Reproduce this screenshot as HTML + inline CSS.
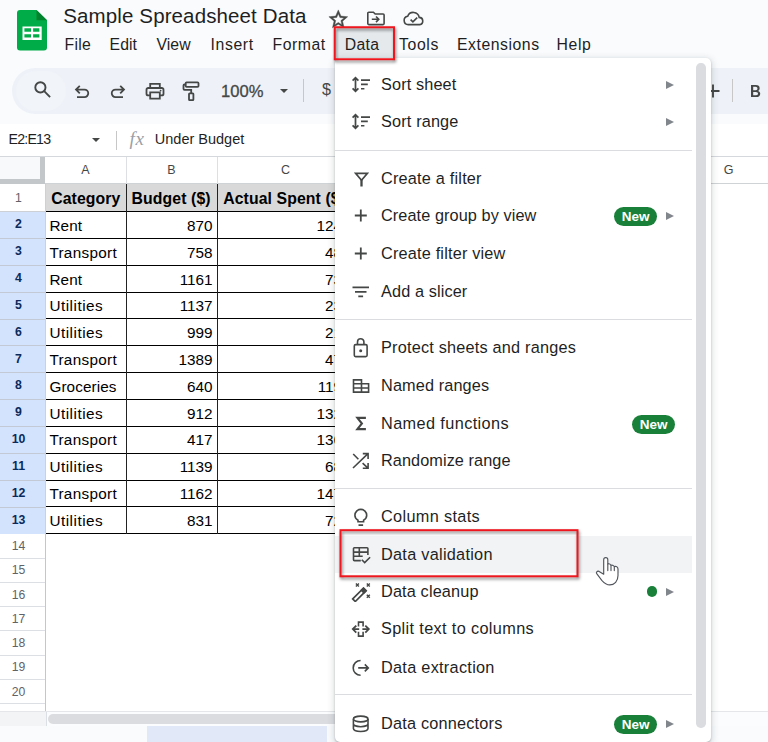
<!DOCTYPE html>
<html lang="en">
<head>
<meta charset="utf-8">
<title>Sample Spreadsheet Data</title>
<style>
*{box-sizing:border-box;margin:0;padding:0}
html,body{width:768px;height:742px;overflow:hidden}
body{position:relative;background:#f9fbfd;font-family:"Liberation Sans",sans-serif;color:#1f1f1f}
.abs{position:absolute}
.t{position:absolute;white-space:nowrap;line-height:1}
/* header */
#title{left:63.3px;top:5.2px;font-size:20.5px;letter-spacing:.12px;color:#1f1f1f;height:22px;line-height:22px}
.mi{top:36px;font-size:15.8px;height:18px;line-height:18px;color:#1f1f1f}
/* toolbar */
#tb{left:12px;top:68px;width:800px;height:46px;border-radius:23px;background:#eef2f8}
/* formula bar */
#fb{left:0;top:123.5px;width:768px;height:32.5px;background:#fff}
/* grid */
.hl{position:absolute;background:#000;height:1px}
.vl{position:absolute;background:#000;width:1px}
.rh{position:absolute;left:0;width:37px;text-align:center;font-size:12.2px;color:#5f6368;height:14px;line-height:14px;white-space:nowrap}
.rhs{font-weight:bold;color:#0b2a5b;font-size:12.3px;margin-top:-1px}
.c{position:absolute;white-space:nowrap;font-size:15.3px;color:#000;line-height:20px;height:20px}
.cb{font-weight:bold;font-size:15.8px;letter-spacing:.1px}
.ca{letter-spacing:.1px}
.cu{letter-spacing:.5px}
.ct{letter-spacing:.3px}
.ch{font-size:12.5px;color:#444746;text-align:center;height:16px;line-height:16px}
/* menu */
#menu{left:335px;top:58px;width:376px;height:684px;background:#fff;border-radius:5px;box-shadow:0 2px 6px 2px rgba(60,64,67,.15),0 1px 2px rgba(60,64,67,.3);overflow:hidden}
.it{position:absolute;left:0;height:37.5px;width:357px}
.it .lb{position:absolute;left:46px;top:0;height:37.5px;line-height:37.5px;font-size:16.3px;white-space:nowrap;color:#1f1f1f}
.it svg.ic{position:absolute;left:15px;top:8.7px;width:21px;height:21px}
.dvl{position:absolute;left:0;width:357px;height:1px;background:#dadce0}
.dot{position:absolute;left:311.500px;top:13.300px;width:10.800px;height:10.800px;border-radius:50%;background:#188038}
.ar{position:absolute;left:331px;top:15.3px;width:0;height:0;border-left:8px solid #80868b;border-top:4px solid transparent;border-bottom:4px solid transparent}
.nw{position:absolute;top:10.2px;width:43.4px;height:19.5px;border-radius:10px;background:#188038;color:#fff;font-weight:bold;font-size:13.5px;line-height:19.5px;text-align:center}
.redf{filter:drop-shadow(1.5px 2px 1.5px rgba(0,0,0,.5))}
</style>
</head>
<body>

<!-- logo -->
<svg class="abs" style="left:17px;top:9.5px" width="30" height="41" viewBox="0 0 30 41">
<path d="M3 0h16.500l10.500 10.300v27.300a3 3 0 0 1-3 3H3a3 3 0 0 1-3-3V3a3 3 0 0 1 3-3z" fill="#00ac47"/>
<path d="M19.500 0l10.500 10.300h-10.500z" fill="#00832d"/>
<path d="M5.500 16.400h19.200v13.500H5.500zM7.400 18.300v3.400h6.600v-3.400zM16.100 18.300v3.400h6.300v-3.400zM7.400 24.300v3.300h6.600v-3.300zM16.100 24.300v3.300h6.300v-3.300z" fill="#fff" fill-rule="evenodd"/>
</svg>

<div class="t" id="title">Sample Spreadsheet Data</div>


<!-- title icons -->
<svg class="abs" style="left:327.2px;top:7.6px" width="22.600" height="22.600" viewBox="0 0 24 24"><path fill="#444746" stroke="#444746" stroke-width=".45" d="M22 9.24l-7.19-.62L12 2 9.19 8.63 2 9.24l5.46 4.73L5.82 21 12 17.27 18.18 21l-1.63-7.03L22 9.24zM12 15.4l-3.76 2.27 1-4.28-3.32-2.88 4.38-.38L12 6.1l1.71 4.04 4.38.38-3.32 2.88 1 4.28L12 15.4z"/></svg>
<svg class="abs" style="left:365px;top:8px" width="22" height="20" viewBox="0 0 22 20"><path d="M2.8 5.2a1 1 0 0 1 1-1h4.6l1.8 1.8h7.9a1 1 0 0 1 1 1v8.6a1 1 0 0 1-1 1H3.8a1 1 0 0 1-1-1z" fill="none" stroke="#444746" stroke-width="1.6"/><path d="M6.8 11.3h6.6M11 8.5l2.8 2.8-2.8 2.8" fill="none" stroke="#444746" stroke-width="1.6"/></svg>
<svg class="abs" style="left:402px;top:9px" width="24" height="18" viewBox="0 0 24 18"><path d="M6.3 15.6a4.2 4.2 0 0 1-.6-8.35 6 6 0 0 1 11.5 1.1 3.65 3.65 0 0 1 .5 7.25z" fill="none" stroke="#444746" stroke-width="1.6"/><path d="M8.6 10.6l2.3 2.3 4.3-4.3" fill="none" stroke="#444746" stroke-width="1.6"/></svg>

<!-- menubar -->
<div class="t mi" style="left:64.5px;letter-spacing:0.3px">File</div>
<div class="t mi" style="left:109.6px;letter-spacing:0.0px">Edit</div>
<div class="t mi" style="left:156.6px;letter-spacing:0.0px">View</div>
<div class="t mi" style="left:210.6px;letter-spacing:0.6px">Insert</div>
<div class="t mi" style="left:272.6px;letter-spacing:0.5px">Format</div>
<div class="abs" style="left:335.5px;top:28px;width:57.5px;height:30.5px;background:#e6e9ec;border-radius:4px"></div>
<div class="t mi" style="left:344.8px;letter-spacing:0.3px">Data</div>
<div class="t mi" style="left:399px;letter-spacing:0.6px">Tools</div>
<div class="t mi" style="left:457px;letter-spacing:0.53px">Extensions</div>
<div class="t mi" style="left:556.6px;letter-spacing:0.55px">Help</div>

<!-- toolbar -->
<div class="abs" id="tb"></div>
<div class="abs" style="left:16px;top:71px;width:50px;height:40px;border-radius:20px;background:#f1f4f9"></div>
<svg class="abs" style="left:30px;top:77.3px" width="24" height="24" viewBox="0 0 24 24"><circle cx="10.4" cy="10.4" r="5.1" fill="none" stroke="#444746" stroke-width="1.9"/><path d="M14.2 14.2l5.9 5.9" stroke="#444746" stroke-width="1.9" fill="none"/></svg>
<svg class="abs" style="left:72px;top:80px" width="20" height="22" viewBox="0 0 20 22"><path d="M7.8 5.8L4 9.6l3.8 3.8M4.4 9.6h8.1a3.75 3.75 0 0 1 0 7.5H5" fill="none" stroke="#444746" stroke-width="1.8"/></svg>
<svg class="abs" style="left:108px;top:80px" width="20" height="22" viewBox="0 0 20 22"><path d="M12.2 5.8L16 9.6l-3.8 3.8M15.6 9.6H7.5a3.75 3.75 0 0 0 0 7.5H15" fill="none" stroke="#444746" stroke-width="1.8"/></svg>
<svg class="abs" style="left:143px;top:80px" width="24" height="22" viewBox="0 0 24 22"><path d="M7.2 8V3.8h9.6V8M6.6 15.4H5.2a1.7 1.7 0 0 1-1.7-1.7V9.7a1.7 1.7 0 0 1 1.7-1.7h13.6a1.7 1.7 0 0 1 1.7 1.7v4a1.7 1.7 0 0 1-1.7 1.7h-1.4M7.2 12.4h9.6v6.2H7.2z" fill="none" stroke="#444746" stroke-width="1.8"/><circle cx="17.6" cy="10.6" r=".9" fill="#444746"/></svg>
<svg class="abs" style="left:180px;top:79px" width="22" height="24" viewBox="0 0 22 24"><path d="M6.6 3.4h11a.9.9 0 0 1 .9.9v2.6a.9.9 0 0 1-.9.9h-11a.9.9 0 0 1-.9-.9V4.300a.9.9 0 0 1 .9-.9zM5.700 5.500H4.500a1 1 0 0 0-1 1v3.300a1 1 0 0 0 1 1h6.700v3.600M9.600 14.400h3.200a.6.600 0 0 1 .6.600v5.600a.6.600 0 0 1-.6.600H9.600a.6.600 0 0 1-.6-.6V15a.6.600 0 0 1 .6-.6z" fill="none" stroke="#444746" stroke-width="1.8"/></svg>
<div class="t" style="left:221px;top:82.2px;font-size:16.6px;height:20px;line-height:20px;color:#444746;-webkit-text-stroke:.3px #444746">100%</div>
<div class="abs" style="left:279.600px;top:88.500px;width:0;height:0;border-top:4.600px solid #444746;border-left:4.400px solid transparent;border-right:4.400px solid transparent"></div>
<div class="abs" style="left:303px;top:79px;width:1px;height:23px;background:#c7c7c7"></div>
<div class="t" style="left:322px;top:79px;font-size:16.200px;height:20px;line-height:20px;color:#444746">$</div>
<svg class="abs" style="left:704px;top:82px" width="18" height="18" viewBox="0 0 18 18"><path d="M9 2.500v13M2.500 9h13" stroke="#444746" stroke-width="1.900" fill="none"/></svg>
<div class="abs" style="left:732px;top:79px;width:1px;height:23px;background:#c7c7c7"></div>
<div class="t" style="left:749.5px;top:80.6px;font-size:17.2px;font-weight:bold;height:20px;line-height:20px;color:#444746;transform:scaleX(.88);transform-origin:0 50%">B</div>

<!-- formula bar -->
<div class="abs" id="fb"></div>
<div class="t" style="left:8.5px;top:130.2px;font-size:14.2px;height:18px;line-height:18px;color:#1f1f1f;letter-spacing:-.8px">E2:E13</div>
<div class="abs" style="left:92.400px;top:137.600px;width:0;height:0;border-top:4.600px solid #444746;border-left:4.600px solid transparent;border-right:4.600px solid transparent"></div>
<div class="abs" style="left:116px;top:131px;width:1px;height:19px;background:#c7c7c7"></div>
<div class="t" style="left:129.5px;top:129px;font-family:'Liberation Serif',serif;font-style:italic;font-size:19px;height:20px;line-height:20px;color:#9aa0a6;letter-spacing:.6px">fx</div>
<div class="t" style="left:154.8px;top:130px;font-size:14.500px;height:18px;line-height:18px;color:#1f1f1f">Under Budget</div>

<!-- grid -->
<!--GRID-->
<div class="abs" style="left:0;top:156px;width:768px;height:570px;background:#fff"></div>
<div class="abs" style="left:0;top:156px;width:768px;height:1px;background:#d5d8dc"></div>
<div class="abs" style="left:0;top:157px;width:45px;height:27px;background:#f8f9fa"></div>
<div class="abs" style="left:40px;top:157px;width:5px;height:27px;background:#c4c7ca"></div>
<div class="abs" style="left:0;top:179px;width:45px;height:5px;background:#c4c7ca"></div>
<div class="abs" style="left:45px;top:183px;width:723px;height:1px;background:#d0d3d6"></div>
<div class="abs" style="left:125.5px;top:157px;width:1px;height:27px;background:#dcdfe3"></div>
<div class="abs" style="left:216.6px;top:157px;width:1px;height:27px;background:#dcdfe3"></div>
<div class="abs" style="left:355px;top:157px;width:1px;height:27px;background:#dcdfe3"></div>
<div class="t ch" style="left:65.5px;top:162px;width:40px">A</div>
<div class="t ch" style="left:151.5px;top:162px;width:40px">B</div>
<div class="t ch" style="left:265.5px;top:162px;width:40px">C</div>
<div class="t ch" style="left:708.5px;top:162px;width:40px">G</div>
<div class="abs" style="left:46px;top:184px;width:320px;height:27px;background:#d9d9d9"></div>
<div class="abs" style="left:0;top:211.8px;width:45px;height:322.2px;background:#d3e3fd"></div>
<div class="abs" style="left:45px;top:184px;width:1px;height:349.5px;background:#cdd0d4"></div>
<div class="abs" style="left:0;top:211.0px;width:45px;height:1px;background:#cdd0d4"></div>
<div class="abs" style="left:0;top:238.0px;width:45px;height:1px;background:#c3cad6"></div>
<div class="abs" style="left:0;top:264.8px;width:45px;height:1px;background:#c3cad6"></div>
<div class="abs" style="left:0;top:291.7px;width:45px;height:1px;background:#c3cad6"></div>
<div class="abs" style="left:0;top:318.5px;width:45px;height:1px;background:#c3cad6"></div>
<div class="abs" style="left:0;top:345.4px;width:45px;height:1px;background:#c3cad6"></div>
<div class="abs" style="left:0;top:372.2px;width:45px;height:1px;background:#c3cad6"></div>
<div class="abs" style="left:0;top:399.1px;width:45px;height:1px;background:#c3cad6"></div>
<div class="abs" style="left:0;top:425.9px;width:45px;height:1px;background:#c3cad6"></div>
<div class="abs" style="left:0;top:452.8px;width:45px;height:1px;background:#c3cad6"></div>
<div class="abs" style="left:0;top:479.6px;width:45px;height:1px;background:#c3cad6"></div>
<div class="abs" style="left:0;top:506.5px;width:45px;height:1px;background:#c3cad6"></div>
<div class="rh" style="top:190.5px">1</div>
<div class="rh rhs" style="top:218.2px">2</div>
<div class="rh rhs" style="top:245.1px">3</div>
<div class="rh rhs" style="top:271.9px">4</div>
<div class="rh rhs" style="top:298.8px">5</div>
<div class="rh rhs" style="top:325.6px">6</div>
<div class="rh rhs" style="top:352.5px">7</div>
<div class="rh rhs" style="top:379.3px">8</div>
<div class="rh rhs" style="top:406.2px">9</div>
<div class="rh rhs" style="top:433.0px">10</div>
<div class="rh rhs" style="top:459.9px">11</div>
<div class="rh rhs" style="top:486.7px">12</div>
<div class="rh rhs" style="top:513.6px">13</div>
<div class="abs" style="left:0;top:557.5px;width:45.5px;height:1px;background:#dcdfe3"></div>
<div class="abs" style="left:0;top:581.8px;width:45.5px;height:1px;background:#dcdfe3"></div>
<div class="abs" style="left:0;top:606.1px;width:45.5px;height:1px;background:#dcdfe3"></div>
<div class="abs" style="left:0;top:630.4px;width:45.5px;height:1px;background:#dcdfe3"></div>
<div class="abs" style="left:0;top:654.7px;width:45.5px;height:1px;background:#dcdfe3"></div>
<div class="abs" style="left:0;top:679.0px;width:45.5px;height:1px;background:#dcdfe3"></div>
<div class="abs" style="left:0;top:703.3px;width:45.5px;height:1px;background:#dcdfe3"></div>
<div class="rh" style="top:538.9px">14</div>
<div class="rh" style="top:563.2px">15</div>
<div class="rh" style="top:587.5px">16</div>
<div class="rh" style="top:611.8px">17</div>
<div class="rh" style="top:636.1px">18</div>
<div class="rh" style="top:660.4px">19</div>
<div class="rh" style="top:684.7px">20</div>
<div class="rh" style="top:709.0px">21</div>
<div class="abs" style="left:45px;top:533.5px;width:1px;height:178.5px;background:#c4c7c5"></div>
<div class="hl" style="left:46px;top:211px;width:320px;height:1px"></div>
<div class="hl" style="left:46px;top:238px;width:320px;height:1px"></div>
<div class="hl" style="left:46px;top:265px;width:320px;height:1px"></div>
<div class="hl" style="left:46px;top:292px;width:320px;height:1px"></div>
<div class="hl" style="left:46px;top:318px;width:320px;height:1px"></div>
<div class="hl" style="left:46px;top:345px;width:320px;height:1px"></div>
<div class="hl" style="left:46px;top:372px;width:320px;height:1px"></div>
<div class="hl" style="left:46px;top:399px;width:320px;height:1px"></div>
<div class="hl" style="left:46px;top:426px;width:320px;height:1px"></div>
<div class="hl" style="left:46px;top:453px;width:320px;height:1px"></div>
<div class="hl" style="left:46px;top:480px;width:320px;height:1px"></div>
<div class="hl" style="left:46px;top:506px;width:320px;height:1px"></div>
<div class="hl" style="left:46px;top:533px;width:320px;height:1px"></div>
<div class="vl" style="left:125.6px;top:184px;height:350.0px;width:1.3px;background:#222"></div>
<div class="vl" style="left:216.7px;top:184px;height:350.0px;width:1.3px;background:#222"></div>
<div class="vl" style="left:355px;top:184px;height:350.0px;width:1.3px;background:#222"></div>
<div class="c cb" style="left:51.2px;top:189.0px">Category</div>
<div class="c cb" style="left:131.6px;top:189.0px">Budget ($)</div>
<div class="c cb" style="left:223.2px;top:189.0px">Actual Spent ($)</div>
<div class="c ca" style="left:49.4px;top:215.9px">Rent</div>
<div class="c " style="right:555.4px;top:215.9px">870</div>
<div class="c " style="right:417.4px;top:215.9px">1243</div>
<div class="c ca ct" style="left:49.4px;top:242.7px">Transport</div>
<div class="c " style="right:555.4px;top:242.7px">758</div>
<div class="c " style="right:417.4px;top:242.7px">483</div>
<div class="c ca" style="left:49.4px;top:269.5px">Rent</div>
<div class="c " style="right:555.4px;top:269.5px">1161</div>
<div class="c " style="right:417.4px;top:269.5px">735</div>
<div class="c ca cu" style="left:49.4px;top:296.3px">Utilities</div>
<div class="c " style="right:555.4px;top:296.3px">1137</div>
<div class="c " style="right:417.4px;top:296.3px">231</div>
<div class="c ca cu" style="left:49.4px;top:323.1px">Utilities</div>
<div class="c " style="right:555.4px;top:323.1px">999</div>
<div class="c " style="right:417.4px;top:323.1px">217</div>
<div class="c ca ct" style="left:49.4px;top:349.9px">Transport</div>
<div class="c " style="right:555.4px;top:349.9px">1389</div>
<div class="c " style="right:417.4px;top:349.9px">471</div>
<div class="c ca" style="left:49.4px;top:376.7px">Groceries</div>
<div class="c " style="right:555.4px;top:376.7px">640</div>
<div class="c " style="right:417.4px;top:376.7px">1195</div>
<div class="c ca cu" style="left:49.4px;top:403.5px">Utilities</div>
<div class="c " style="right:555.4px;top:403.5px">912</div>
<div class="c " style="right:417.4px;top:403.5px">1321</div>
<div class="c ca ct" style="left:49.4px;top:430.3px">Transport</div>
<div class="c " style="right:555.4px;top:430.3px">417</div>
<div class="c " style="right:417.4px;top:430.3px">1360</div>
<div class="c ca cu" style="left:49.4px;top:457.1px">Utilities</div>
<div class="c " style="right:555.4px;top:457.1px">1139</div>
<div class="c " style="right:417.4px;top:457.1px">685</div>
<div class="c ca ct" style="left:49.4px;top:483.9px">Transport</div>
<div class="c " style="right:555.4px;top:483.9px">1162</div>
<div class="c " style="right:417.4px;top:483.9px">1471</div>
<div class="c ca cu" style="left:49.4px;top:510.7px">Utilities</div>
<div class="c " style="right:555.4px;top:510.7px">831</div>
<div class="c " style="right:417.4px;top:510.7px">722</div>
<!--/GRID-->
<!-- bottom -->
<div class="abs" style="left:0;top:711.6px;width:768px;height:14.4px;background:#fbfcfd"></div>
<div class="abs" style="left:0;top:711.6px;width:45.5px;height:14.4px;background:#f3f4f5"></div>
<div class="abs" style="left:45.5px;top:711.6px;width:1px;height:14.4px;background:#dcdfe3"></div>
<div class="abs" style="left:0;top:711.4px;width:768px;height:1px;background:#e4e6e9"></div>
<div class="abs" style="left:48px;top:713.6px;width:660px;height:10.6px;border-radius:5.3px;background:#dadce0"></div>
<div class="abs" style="left:0;top:725.6px;width:768px;height:1px;background:#e1e3e6"></div>
<div class="abs" style="left:0;top:726.4px;width:768px;height:16px;background:#f9fbfd"></div>
<div class="abs" style="left:147px;top:726.4px;width:180px;height:16px;background:#e1e8f7"></div>


<!-- menu -->
<div class="abs" id="menu">
<!--MENU-->
<div class="it" style="top:7.6px"><svg class="ic" viewBox="0 0 21 21" fill="none" stroke="#444746" stroke-width="1.6"><path d="M5.500 3.800v13.400M2.600 6.600l2.900-2.900 2.900 2.900M2.600 14.400l2.900 2.900 2.900-2.900" stroke-width="1.750"/><path d="M11 6.100h9M11 10.400h6.800M11 14.700h3.400"/></svg><span class="lb" style="letter-spacing:0.12px">Sort sheet</span><i class="ar"></i></div>
<div class="it" style="top:44.6px"><svg class="ic" viewBox="0 0 21 21" fill="none" stroke="#444746" stroke-width="1.6"><path d="M5.500 3.800v13.400M2.600 6.600l2.900-2.900 2.900 2.900M2.600 14.400l2.900 2.900 2.900-2.900" stroke-width="1.750"/><path d="M11 6.100h9M11 10.400h6.800M11 14.700h3.400"/></svg><span class="lb" style="letter-spacing:0.15px">Sort range</span><i class="ar"></i></div>
<div class="it" style="top:101.6px"><svg class="ic" viewBox="0 0 21 21" fill="none" stroke="#444746" stroke-width="1.6"><path d="M5.600 5.300h11.800L11.500 12.300z" stroke-width="1.700" stroke-linejoin="miter"/><path d="M11.500 11.500v7.100" stroke-width="2.300"/></svg><span class="lb" style="letter-spacing:0.2px">Create a filter</span></div>
<div class="it" style="top:138.6px"><svg class="ic" viewBox="0 0 21 21" fill="none" stroke="#444746" stroke-width="1.6"><path d="M10.800 4.500v12M4.800 10.500h12" stroke-width="1.800"/></svg><span class="lb" style="letter-spacing:0.08px">Create group by view</span><span class="nw" style="left:279px">New</span><i class="ar"></i></div>
<div class="it" style="top:176.6px"><svg class="ic" viewBox="0 0 21 21" fill="none" stroke="#444746" stroke-width="1.6"><path d="M10.800 4.500v12M4.800 10.500h12" stroke-width="1.800"/></svg><span class="lb" style="letter-spacing:0.18px">Create filter view</span></div>
<div class="it" style="top:214.6px"><svg class="ic" viewBox="0 0 21 21" fill="none" stroke="#444746" stroke-width="1.6"><path d="M2.500 6.300h16.500M5 10.900h11.500M8.300 15.300h4.800" stroke-width="1.700"/></svg><span class="lb" style="letter-spacing:0.11px">Add a slicer</span></div>
<div class="it" style="top:270.6px"><svg class="ic" viewBox="0 0 21 21" fill="none" stroke="#444746" stroke-width="1.6"><rect x="4.300" y="7.600" width="12.800" height="12" rx="1.300"/><path d="M7.500 7.600V4.900a3.200 3.200 0 0 1 6.400 0v2.700"/><circle cx="10.700" cy="13.700" r="1.500" fill="#444746" stroke="none"/></svg><span class="lb" style="letter-spacing:0.2px">Protect sheets and ranges</span></div>
<div class="it" style="top:308.6px"><svg class="ic" viewBox="0 0 21 21" fill="none" stroke="#444746" stroke-width="1.6"><path d="M3.500 4.900h8v3.900h7.100v8.300H3.500zM3.500 8.800h8M3.500 13h15.100M11.500 8.800v8.300"/></svg><span class="lb" style="letter-spacing:0.12px">Named ranges</span></div>
<div class="it" style="top:346.6px"><svg class="ic" viewBox="0 0 21 21" fill="none" stroke="#444746" stroke-width="1.6"><path d="M15.900 4.900H7.400l4.500 5.600-4.500 5.600h8.500" stroke-width="2.100" stroke-linejoin="miter"/></svg><span class="lb" style="letter-spacing:0.39px">Named functions</span><span class="nw" style="left:297px">New</span></div>
<div class="it" style="top:383.6px"><svg class="ic" viewBox="0 0 21 21" fill="none" stroke="#444746" stroke-width="1.6"><path d="M3 18L18 3.600M12.800 3.600h5.300v5.300M3.200 4l5.200 5.200M12.600 13.200l5.400 5M12.800 18.300h5.300v-5.300"/></svg><span class="lb" style="letter-spacing:0.07px">Randomize range</span></div>
<div class="it" style="top:439.6px"><svg class="ic" viewBox="0 0 21 21" fill="none" stroke="#444746" stroke-width="1.6"><path d="M8 14.300c-1.900-1.100-3.100-2.900-3.100-5a5.900 5.900 0 0 1 11.800 0c0 2.100-1.200 3.900-3.100 5v1.500H8zM8 15.800h5.600M8.500 19.100h4.600"/></svg><span class="lb" style="letter-spacing:0.34px">Column stats</span></div>
<div class="it" style="top:477.6px;background:#f1f3f4"><svg class="ic" viewBox="0 0 21 21" fill="none" stroke="#444746" stroke-width="1.6"><path d="M10.800 16.600H4.400a.9.900 0 0 1-.9-.9V4.600a.9.900 0 0 1 .9-.9h12.600a.9.900 0 0 1 .9.900v6.400M3.500 8.100h14.400M3.500 12.300h9.200M9.300 3.700v8.600M11.800 15.700l2.900 2.900 5.400-5.400"/></svg><span class="lb" style="letter-spacing:0.27px">Data validation</span></div>
<div class="it" style="top:514.6px"><svg class="ic" viewBox="0 0 21 21" fill="none" stroke="#444746" stroke-width="1.6"><path d="M2.700 17.900L13.500 7.100l2.600 2.600L5.300 20.500z" stroke-width="1.700"/><path d="M11.300 9.300l2.600 2.600 2.200-2.200-2.600-2.600z" fill="#444746"/><path d="M5.900 2.500l3 3M8.900 2.500l-3 3M16.800 2.500l3 3M19.800 2.500l-3 3M16.800 13.700l3 3M19.800 13.700l-3 3" stroke-width="1.400"/></svg><span class="lb" style="letter-spacing:0.14px">Data cleanup</span><i class="dot"></i><i class="ar"></i></div>
<div class="it" style="top:551.6px"><svg class="ic" viewBox="0 0 21 21" fill="none" stroke="#444746" stroke-width="1.6"><path d="M8.500 8.400V4.100h4.600v4.300M8.500 13.800v4.300h4.600v-4.300" /><path d="M3.200 11.100h6M12.400 11.100h6" stroke-width="1.700"/><path d="M6.300 7.600l-3.500 3.500 3.500 3.500M15.300 7.600l3.500 3.500-3.500 3.500" stroke-width="1.800"/></svg><span class="lb" style="letter-spacing:0.35px">Split text to columns</span></div>
<div class="it" style="top:590.6px"><svg class="ic" viewBox="0 0 21 21" fill="none" stroke="#444746" stroke-width="1.6"><path d="M10.600 18.300a7.400 7.400 0 0 1 0-14.800"/><path d="M8.200 10.900h10M14.800 7.400l3.500 3.500-3.500 3.500"/></svg><span class="lb" style="letter-spacing:0.28px">Data extraction</span></div>
<div class="it" style="top:646.6px"><svg class="ic" viewBox="0 0 21 21" fill="none" stroke="#444746" stroke-width="1.6"><ellipse cx="10.700" cy="6" rx="7.300" ry="2.900"/><path d="M3.400 6v9.600c0 1.600 3.200 2.900 7.300 2.900s7.300-1.300 7.300-2.900V6M3.400 10.800c0 1.600 3.200 2.900 7.300 2.900s7.300-1.300 7.300-2.900"/></svg><span class="lb" style="letter-spacing:0.2px">Data connectors</span><span class="nw" style="left:279px">New</span><i class="ar"></i></div>
<div class="dvl" style="top:92px"></div>
<div class="dvl" style="top:261px"></div>
<div class="dvl" style="top:430px"></div>
<div class="dvl" style="top:636px"></div>
<div class="abs" style="left:361.3px;top:5.2px;width:9.4px;height:664.600px;background:#dadce0;border-radius:4.700px"></div>
<!--/MENU-->
</div>

<!-- red highlights -->
<svg class="abs redf" style="left:328px;top:20px" width="80" height="50"><rect x="6.750" y="7.250" width="59.250" height="32" fill="none" stroke="#f0161e" stroke-width="2"/></svg>
<svg class="abs redf" style="left:334px;top:522px" width="256" height="66"><rect x="6.500" y="8.200" width="237" height="46.100" fill="none" stroke="#f0161e" stroke-width="2"/></svg>

<!-- cursor -->
<svg class="abs" style="left:585px;top:548px" width="48" height="48" viewBox="0 0 48 48"><path d="M18.700 26.200V11.700a2.050 2.050 0 0 1 4.100 0V16q1.900-.8 3.200 1.300 1.800-.7 3.300 1.200 3.500-.5 3.700 2.600V27.500c0 5.500-3.500 9.400-8.200 9.400-3.500 0-5.300-1.500-8-4.600L11.900 25.900c-1.300-1.500.3-3.300 2.200-2.500z" fill="#fff" stroke="#50555c" stroke-width="1.150" stroke-linejoin="round"/><path d="M22.800 16v6.600M26 17.600v5M29.300 18.900v3.700" fill="none" stroke="#50555c" stroke-width="1.150" stroke-linecap="round"/></svg>

</body>
</html>
